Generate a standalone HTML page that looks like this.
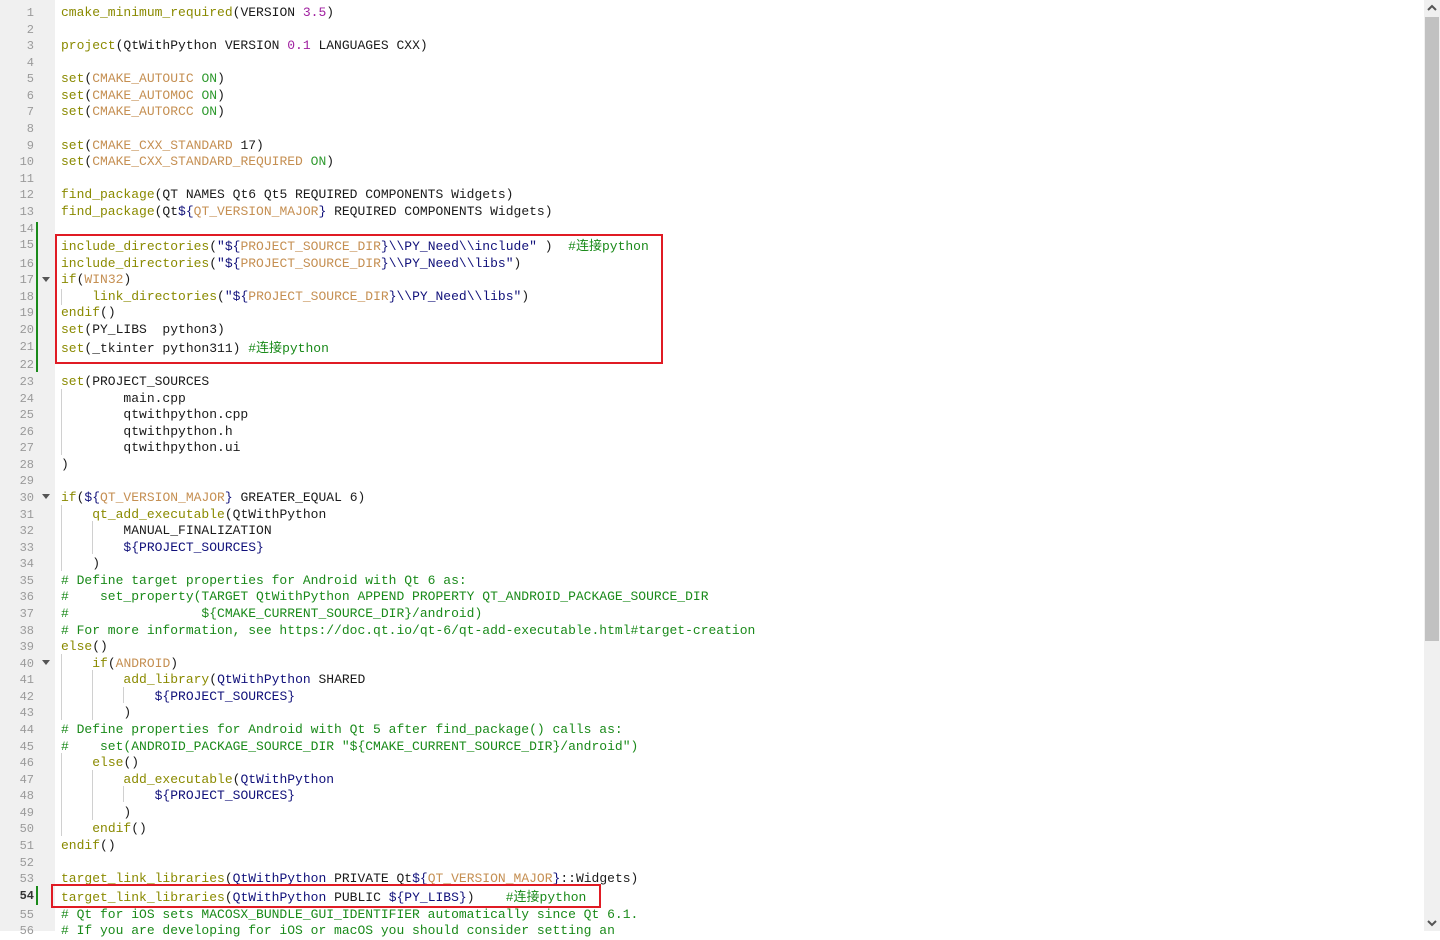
<!DOCTYPE html>
<html><head><meta charset="utf-8"><style>
body{margin:0;width:1440px;height:931px;overflow:hidden;background:#fff;position:relative;font-family:"Liberation Mono","Noto Sans CJK SC",monospace;}
#gut{position:absolute;left:0;top:0;width:55px;height:931px;background:#f0f0f0;}
.ln{position:absolute;left:0;width:34px;text-align:right;font-size:12px;color:#9a9a9a;height:18px;line-height:18px;transform:translateY(1px);}
.l{position:absolute;left:61px;height:18px;line-height:18px;font-size:13px;color:#1a1a1a;white-space:pre;transform:translateY(1px);}
.k{color:#8a8a00}.v{color:#c58f52}.g{color:#2f9a2f}.n{color:#a020a0}.b{color:#10107a}.c{color:#1a8a1a}
.cj{font-family:"Noto Sans CJK SC",sans-serif;font-size:13px}
.gd{position:absolute;width:1px;background:#d0d0d0;}
.fold{position:absolute;left:42px;width:0;height:0;border-left:4px solid transparent;border-right:4px solid transparent;border-top:5px solid #555;}
.box{position:absolute;border:2px solid #e01b24;box-sizing:border-box;}
.chg{position:absolute;left:36px;width:2px;background:#1a8a1a;}
#sb{position:absolute;left:1424px;top:0;width:16px;height:931px;background:#f0f0f0;}
#th{position:absolute;left:1425px;top:17px;width:14px;height:624px;background:#c1c1c1;}
</style></head><body>
<div id="gut"></div>
<div class="chg" style="top:222px;height:150px"></div>
<div class="chg" style="top:886px;height:19px"></div>
<div class="fold" style="top:277px"></div>
<div class="fold" style="top:494px"></div>
<div class="fold" style="top:660px"></div>

<div class="ln" style="top:3px">1</div><div class="ln" style="top:20px">2</div><div class="ln" style="top:36px">3</div><div class="ln" style="top:53px">4</div><div class="ln" style="top:69px">5</div><div class="ln" style="top:86px">6</div><div class="ln" style="top:102px">7</div><div class="ln" style="top:119px">8</div><div class="ln" style="top:136px">9</div><div class="ln" style="top:152px">10</div><div class="ln" style="top:169px">11</div><div class="ln" style="top:185px">12</div><div class="ln" style="top:202px">13</div><div class="ln" style="top:219px">14</div><div class="ln" style="top:235px">15</div><div class="ln" style="top:254px">16</div><div class="ln" style="top:270px">17</div><div class="ln" style="top:287px">18</div><div class="ln" style="top:303px">19</div><div class="ln" style="top:320px">20</div><div class="ln" style="top:337px">21</div><div class="ln" style="top:355px">22</div><div class="ln" style="top:372px">23</div><div class="ln" style="top:389px">24</div><div class="ln" style="top:405px">25</div><div class="ln" style="top:422px">26</div><div class="ln" style="top:438px">27</div><div class="ln" style="top:455px">28</div><div class="ln" style="top:471px">29</div><div class="ln" style="top:488px">30</div><div class="ln" style="top:505px">31</div><div class="ln" style="top:521px">32</div><div class="ln" style="top:538px">33</div><div class="ln" style="top:554px">34</div><div class="ln" style="top:571px">35</div><div class="ln" style="top:587px">36</div><div class="ln" style="top:604px">37</div><div class="ln" style="top:621px">38</div><div class="ln" style="top:637px">39</div><div class="ln" style="top:654px">40</div><div class="ln" style="top:670px">41</div><div class="ln" style="top:687px">42</div><div class="ln" style="top:703px">43</div><div class="ln" style="top:720px">44</div><div class="ln" style="top:737px">45</div><div class="ln" style="top:753px">46</div><div class="ln" style="top:770px">47</div><div class="ln" style="top:786px">48</div><div class="ln" style="top:803px">49</div><div class="ln" style="top:819px">50</div><div class="ln" style="top:836px">51</div><div class="ln" style="top:853px">52</div><div class="ln" style="top:869px">53</div><div class="ln" style="top:886px;color:#333;font-weight:bold">54</div><div class="ln" style="top:905px">55</div><div class="ln" style="top:921px">56</div>

<div class="gd" style="left:61px;top:289px;height:16px"></div>
<div class="gd" style="left:61px;top:389px;height:66px"></div>
<div class="gd" style="left:61px;top:505px;height:66px"></div>
<div class="gd" style="left:92px;top:521px;height:33px"></div>
<div class="gd" style="left:61px;top:654px;height:66px"></div>
<div class="gd" style="left:92px;top:670px;height:50px"></div>
<div class="gd" style="left:123px;top:687px;height:16px"></div>
<div class="gd" style="left:61px;top:753px;height:83px"></div>
<div class="gd" style="left:92px;top:770px;height:50px"></div>
<div class="gd" style="left:123px;top:786px;height:16px"></div>

<div class="l" style="top:3px"><span class="k">cmake_minimum_required</span>(VERSION <span class="n">3.5</span>)</div>
<div class="l" style="top:36px"><span class="k">project</span>(QtWithPython VERSION <span class="n">0.1</span> LANGUAGES CXX)</div>
<div class="l" style="top:69px"><span class="k">set</span>(<span class="v">CMAKE_AUTOUIC</span> <span class="g">ON</span>)</div>
<div class="l" style="top:86px"><span class="k">set</span>(<span class="v">CMAKE_AUTOMOC</span> <span class="g">ON</span>)</div>
<div class="l" style="top:102px"><span class="k">set</span>(<span class="v">CMAKE_AUTORCC</span> <span class="g">ON</span>)</div>
<div class="l" style="top:136px"><span class="k">set</span>(<span class="v">CMAKE_CXX_STANDARD</span> 17)</div>
<div class="l" style="top:152px"><span class="k">set</span>(<span class="v">CMAKE_CXX_STANDARD_REQUIRED</span> <span class="g">ON</span>)</div>
<div class="l" style="top:185px"><span class="k">find_package</span>(QT NAMES Qt6 Qt5 REQUIRED COMPONENTS Widgets)</div>
<div class="l" style="top:202px"><span class="k">find_package</span>(Qt<span class="b">${</span><span class="v">QT_VERSION_MAJOR</span><span class="b">}</span> REQUIRED COMPONENTS Widgets)</div>
<div class="l" style="top:235px"><span class="k">include_directories</span>(<span class="b">"${</span><span class="v">PROJECT_SOURCE_DIR</span><span class="b">}\\PY_Need\\include"</span> )  <span class="c">#<span class="cj">连接</span>python</span></div>
<div class="l" style="top:254px"><span class="k">include_directories</span>(<span class="b">"${</span><span class="v">PROJECT_SOURCE_DIR</span><span class="b">}\\PY_Need\\libs"</span>)</div>
<div class="l" style="top:270px"><span class="k">if</span>(<span class="v">WIN32</span>)</div>
<div class="l" style="top:287px">    <span class="k">link_directories</span>(<span class="b">"${</span><span class="v">PROJECT_SOURCE_DIR</span><span class="b">}\\PY_Need\\libs"</span>)</div>
<div class="l" style="top:303px"><span class="k">endif</span>()</div>
<div class="l" style="top:320px"><span class="k">set</span>(PY_LIBS  python3)</div>
<div class="l" style="top:337px"><span class="k">set</span>(_tkinter python311) <span class="c">#<span class="cj">连接</span>python</span></div>
<div class="l" style="top:372px"><span class="k">set</span>(PROJECT_SOURCES</div>
<div class="l" style="top:389px">        main.cpp</div>
<div class="l" style="top:405px">        qtwithpython.cpp</div>
<div class="l" style="top:422px">        qtwithpython.h</div>
<div class="l" style="top:438px">        qtwithpython.ui</div>
<div class="l" style="top:455px">)</div>
<div class="l" style="top:488px"><span class="k">if</span>(<span class="b">${</span><span class="v">QT_VERSION_MAJOR</span><span class="b">}</span> GREATER_EQUAL 6)</div>
<div class="l" style="top:505px">    <span class="k">qt_add_executable</span>(QtWithPython</div>
<div class="l" style="top:521px">        MANUAL_FINALIZATION</div>
<div class="l" style="top:538px">        <span class="b">${PROJECT_SOURCES}</span></div>
<div class="l" style="top:554px">    )</div>
<div class="l c" style="top:571px"># Define target properties for Android with Qt 6 as:</div>
<div class="l c" style="top:587px">#    set_property(TARGET QtWithPython APPEND PROPERTY QT_ANDROID_PACKAGE_SOURCE_DIR</div>
<div class="l c" style="top:604px">#                 ${CMAKE_CURRENT_SOURCE_DIR}/android)</div>
<div class="l c" style="top:621px"># For more information, see https://doc.qt.io/qt-6/qt-add-executable.html#target-creation</div>
<div class="l" style="top:637px"><span class="k">else</span>()</div>
<div class="l" style="top:654px">    <span class="k">if</span>(<span class="v">ANDROID</span>)</div>
<div class="l" style="top:670px">        <span class="k">add_library</span>(<span class="b">QtWithPython</span> SHARED</div>
<div class="l" style="top:687px">            <span class="b">${PROJECT_SOURCES}</span></div>
<div class="l" style="top:703px">        )</div>
<div class="l c" style="top:720px"># Define properties for Android with Qt 5 after find_package() calls as:</div>
<div class="l c" style="top:737px">#    set(ANDROID_PACKAGE_SOURCE_DIR "${CMAKE_CURRENT_SOURCE_DIR}/android")</div>
<div class="l" style="top:753px">    <span class="k">else</span>()</div>
<div class="l" style="top:770px">        <span class="k">add_executable</span>(<span class="b">QtWithPython</span></div>
<div class="l" style="top:786px">            <span class="b">${PROJECT_SOURCES}</span></div>
<div class="l" style="top:803px">        )</div>
<div class="l" style="top:819px">    <span class="k">endif</span>()</div>
<div class="l" style="top:836px"><span class="k">endif</span>()</div>
<div class="l" style="top:869px"><span class="k">target_link_libraries</span>(<span class="b">QtWithPython</span> PRIVATE Qt<span class="b">${</span><span class="v">QT_VERSION_MAJOR</span><span class="b">}</span>::Widgets)</div>
<div class="l" style="top:886px"><span class="k">target_link_libraries</span>(<span class="b">QtWithPython</span> PUBLIC <span class="b">${PY_LIBS}</span>)    <span class="c">#<span class="cj">连接</span>python</span></div>
<div class="l c" style="top:905px"># Qt for iOS sets MACOSX_BUNDLE_GUI_IDENTIFIER automatically since Qt 6.1.</div>
<div class="l c" style="top:921px"># If you are developing for iOS or macOS you should consider setting an</div>

<div class="box" style="left:55px;top:234px;width:608px;height:130px"></div>
<div class="box" style="left:51px;top:884px;width:550px;height:24px"></div>

<div id="sb"></div><div id="th"></div>
<svg style="position:absolute;left:1426px;top:3px" width="12" height="10"><path d="M2 7 L6 3 L10 7" stroke="#555" stroke-width="2" fill="none"/></svg>
<svg style="position:absolute;left:1426px;top:918px" width="12" height="10"><path d="M2 3 L6 7 L10 3" stroke="#555" stroke-width="2" fill="none"/></svg>
</body></html>
